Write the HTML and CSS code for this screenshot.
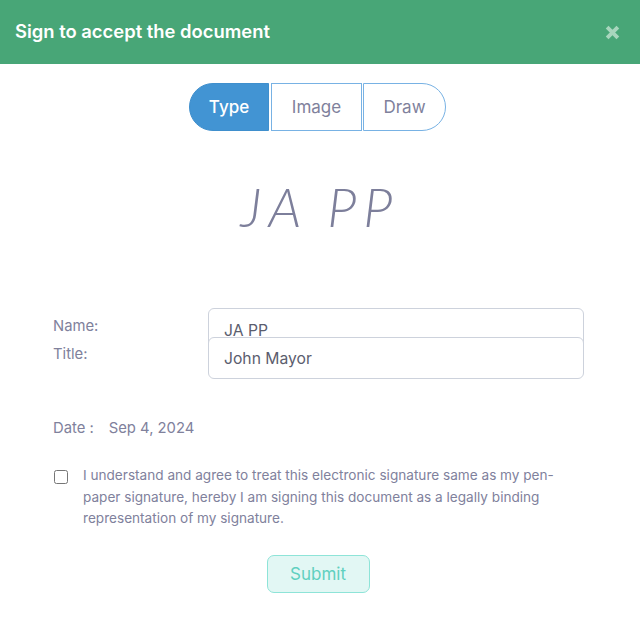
FILE: index.html
```html
<!DOCTYPE html>
<html lang="en">
<head>
<meta charset="utf-8">
<title>Sign to accept the document</title>
<link rel="stylesheet" href="styles.css">
</head>
<body>
<header class="head">
  <h1 class="head-title">Sign to accept the document</h1>
  <svg class="close" viewBox="0 0 14 14" aria-label="Close"><path d="M2 2 12 12M12 2 2 12"/></svg>
</header>
<nav class="tabs">
  <button class="tab tab-type">Type</button>
  <button class="tab tab-image">Image</button>
  <button class="tab tab-draw">Draw</button>
</nav>
<div class="signature">JA PP</div>
<form class="form">
  <div class="fields">
    <label class="label label-name">Name:</label>
    <input class="input input-name" value="JA PP">
    <label class="label label-title">Title:</label>
    <input class="input input-title" value="John Mayor">
  </div>
  <p class="date"><span class="date-key">Date :</span><span>Sep 4, 2024</span></p>
  <div class="agree">
    <span class="check"></span>
    <p class="agree-text">I understand and agree to treat this electronic signature same as my pen-paper signature, hereby I am signing this document as a legally binding representation of my signature.</p>
  </div>
  <div class="actions"><button type="button" class="submit">Submit</button></div>
</form>
</body>
</html>
```
FILE: styles.css
```css
* { box-sizing: border-box; }
html, body { margin: 0; height: 635px; overflow: hidden; background: #fff; }
body { font-family: "Inter", "Liberation Sans", sans-serif; color: #80819c; }

.head { height: 64px; background: #48a677; display: flex; align-items: center; justify-content: space-between; padding: 0 20px 0 15px; }
.head-title { margin: 0; font-size: 18.4px; font-weight: 600; color: #fff; position: relative; top: -1px; }
.close { width: 15px; height: 15px; fill: none; stroke: #a8d6bd; stroke-width: 3.6; }

.tabs { display: flex; justify-content: center; gap: 2px; margin-top: 19px; padding-right: 5px; }
.tab { height: 48px; border: 1px solid #78b2e4; background: #fff; color: #80819c; font: 400 17px "Inter", "Liberation Sans", sans-serif; padding: 0; }
.tab-type { width: 80px; background: #4294d3; border-color: #3f8fcd; color: #fff; font-weight: 500; border-radius: 24px 0 0 24px; }
.tab-image { width: 91px; }
.tab-draw { width: 83px; margin-left: -1px; border-radius: 0 24px 24px 0; }

.signature { margin-top: 48px; height: 54px; text-align: center; font: italic 300 54px/56px "Lato", "Liberation Serif", serif; color: #7d7f9b; letter-spacing: 7px; }

.form { margin: 0; padding: 0 56px 0 53px; }
.fields { margin-top: 75px; display: grid; grid-template-columns: 155px 376px; grid-template-rows: 29px 42px; }
.label { font-size: 14.8px; line-height: 20px; }
.label-name { padding-top: 8px; }
.label-title { padding-top: 7px; }
.input { width: 376px; height: 42px; border: 1px solid #cdd2dc; border-radius: 6px; padding: 0 15px; background: #fff; color: #5b5d6e; font: 400 15.7px "Inter", "Liberation Sans", sans-serif; outline: 0; }
.input-name { padding-top: 2px; }

.date { margin: 39px 0 0; display: flex; gap: 15px; font-size: 14.8px; line-height: 20px; }

.agree { display: flex; gap: 15px; margin-top: 21px; }
.check { flex: none; width: 14px; height: 14px; margin-top: 11px; border: 1.5px solid #767676; border-radius: 2.5px; background: #fff; margin-left: 1px; }
.agree-text { margin: 0; width: 480px; font-size: 13.6px; line-height: 21.5px; padding-top: 6px; }

.actions { display: flex; justify-content: center; margin-top: 25px; padding-right: 1px; }
.submit { width: 103px; height: 38px; border: 1px solid #8ee4d8; border-radius: 7px; background: #e2f7f4; color: #5fd0c0; font: 400 17px "Inter", "Liberation Sans", sans-serif; padding: 0; }
```
